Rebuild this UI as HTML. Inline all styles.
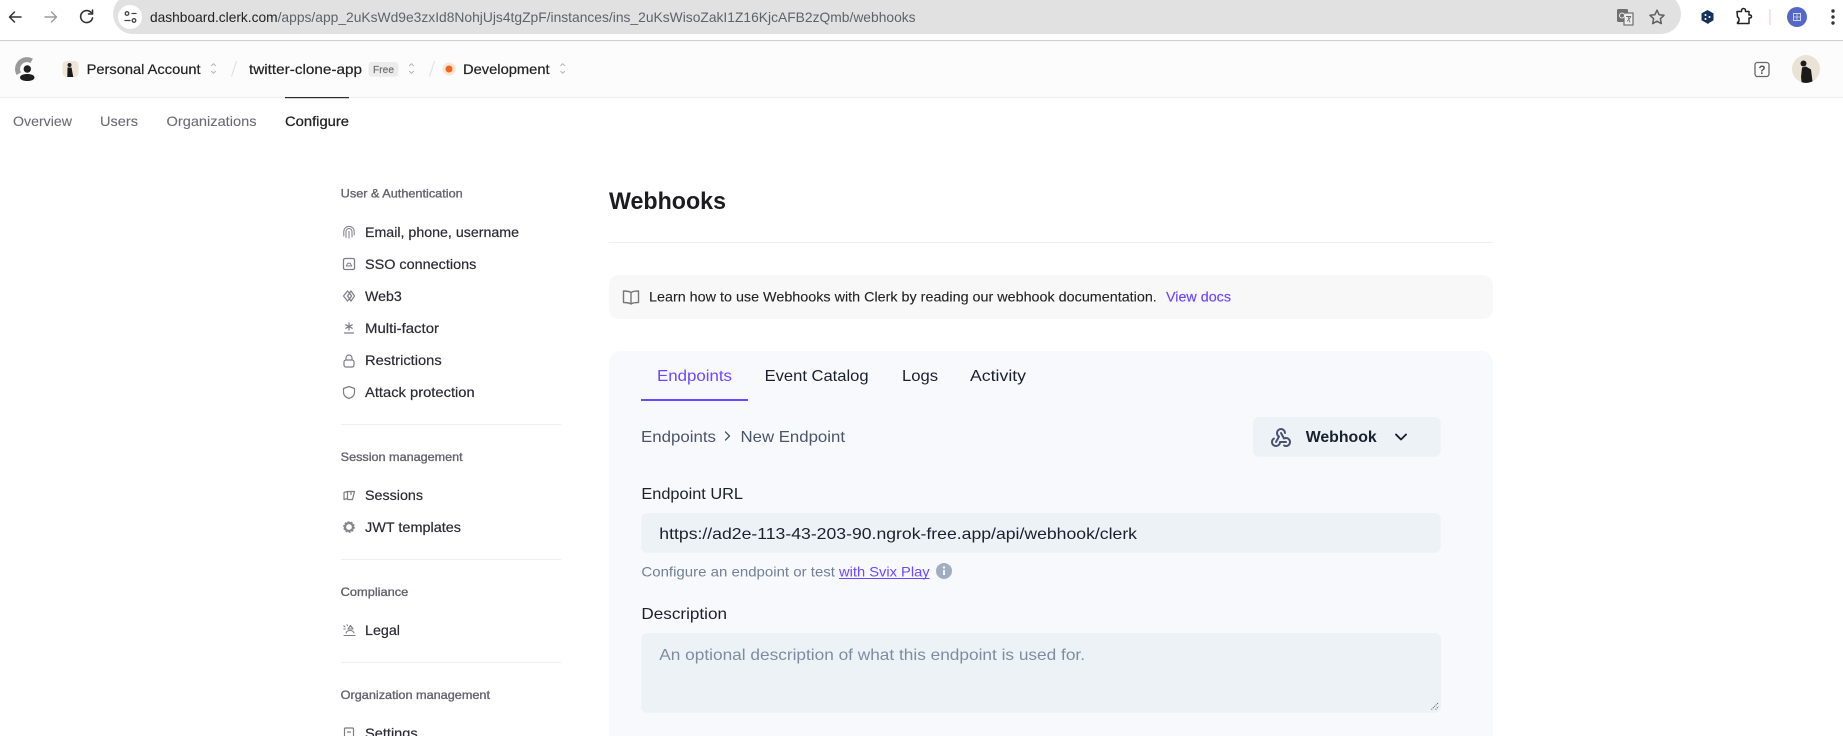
<!DOCTYPE html>
<html lang="en">
<head>
<meta charset="utf-8">
<title>Webhooks</title>
<style>
html,body{margin:0;padding:0;background:#fff;width:1843px;height:736px;overflow:hidden}
svg{display:block;font-family:"Liberation Sans",sans-serif}
.nav{font-size:14px;fill:#6b6b73;stroke:#6b6b73;stroke-width:.1}
.side{font-size:14px;fill:#2b2b33;stroke:#2b2b33;stroke-width:.2}
.head{font-size:12px;fill:#64646e;stroke:#64646e;stroke-width:.35}
.ic{fill:none;stroke:#7d7d85;stroke-width:1.2;stroke-linecap:round;stroke-linejoin:round}
.top{font-size:14px;fill:#222;stroke:#222;stroke-width:.2}
.ch{fill:none;stroke:#b0b0b5;stroke-width:1;stroke-linecap:round;stroke-linejoin:round}
</style>
</head>
<body>
<svg width="1843" height="736" viewBox="0 0 1843 736" xmlns="http://www.w3.org/2000/svg">
<defs><clipPath id="av"><circle cx="1806" cy="69" r="14"/></clipPath></defs>
<!-- browser bar -->
<rect width="1843" height="40" fill="#fff"/>
<rect x="0" y="40" width="1843" height="1.2" fill="#cfcfcf"/>
<rect x="113" y="-6" width="1568" height="40" rx="20" fill="#e1e1e1"/>
<circle cx="130" cy="17" r="12" fill="#fff"/>
<g fill="none" stroke="#444" stroke-width="1.3" stroke-linecap="round">
<circle cx="127" cy="13.5" r="1.8"/><path d="M132 13.5h4"/>
<circle cx="134" cy="20.5" r="1.8"/><path d="M125 20.5h5"/>
</g>
<g fill="none" stroke="#333" stroke-width="1.5" stroke-linecap="round" stroke-linejoin="round">
<path d="M21 17H10M14.500 12L9.500 17l5 5"/>
</g>
<g fill="none" stroke="#9a9a9a" stroke-width="1.4" stroke-linecap="round" stroke-linejoin="round">
<path d="M45 17h11M51.500 12l5 5-5 5"/>
</g>
<g fill="none" stroke="#333" stroke-width="1.6" stroke-linecap="round" stroke-linejoin="round">
<path d="M91.500 13a6 6 0 1 0 1 5"/><path d="M92.500 10v4h-4"/>
</g>
<text x="150" y="22" font-size="14" fill="#222" textLength="127.600" lengthAdjust="spacingAndGlyphs">dashboard.clerk.com</text>
<text x="277.600" y="22" font-size="14" fill="#5f6368" textLength="638" lengthAdjust="spacingAndGlyphs">/apps/app_2uKsWd9e3zxId8NohjUjs4tgZpF/instances/ins_2uKsWisoZakI1Z16KjcAFB2zQmb/webhooks</text>
<!-- translate icon -->
<rect x="1617" y="9" width="11" height="13" rx="1.500" fill="#6f6f6f"/>
<rect x="1624" y="13" width="9" height="12" fill="#eee" stroke="#6f6f6f" stroke-width="1.200"/>
<circle cx="1622" cy="15.500" r="2.500" fill="none" stroke="#eee" stroke-width="1"/>
<path d="M1626 16.500h5M1628 16.500l2 6M1631 16.500l-4 5" stroke="#6f6f6f" stroke-width=".9" fill="none"/>
<path d="M1657 10.200l2.100 4.500 4.900.6-3.600 3.400.9 4.900-4.300-2.400-4.300 2.400.9-4.900-3.600-3.400 4.900-.6z" fill="none" stroke="#5f5f5f" stroke-width="1.500" stroke-linejoin="round"/>
<!-- extension hex -->
<path d="M1707.500 10l6 3.400v6.800l-5 3v1l-1.500-.8-5.500-3.200v-6.800z" fill="#16325c"/>
<circle cx="1705.500" cy="15" r="1" fill="#fff"/><circle cx="1709.500" cy="17" r="1" fill="#fff"/><circle cx="1705.500" cy="19" r="1" fill="#fff"/>
<path d="M1737 11.500h4.500v-1a2 2 0 0 1 4 0v1h3.500v3.500h1a1.500 1.500 0 0 1 0 3h-1v5.500h-11.500v-1a2.500 2.500 0 0 0 1.500-2.500 2.500 2.500 0 0 0-1.500-3z" fill="none" stroke="#222" stroke-width="1.500" stroke-linejoin="round"/>
<rect x="1769.300" y="9" width="1.400" height="16" fill="#e6d8f8"/>
<circle cx="1797" cy="17" r="10" fill="#5568c6"/>
<rect x="1793.500" y="13.500" width="7" height="7" fill="none" stroke="#cfd5f3" stroke-width="1"/><path d="M1793.500 17h7M1797 13.500v7" stroke="#cfd5f3" stroke-width=".8"/>
<circle cx="1833" cy="11" r="1.700" fill="#333"/><circle cx="1833" cy="17" r="1.700" fill="#333"/><circle cx="1833" cy="23" r="1.700" fill="#333"/>

<!-- app header -->
<rect y="41.200" width="1843" height="56" fill="#fcfcfc"/>
<rect y="97" width="1843" height="1" fill="#eeeeee"/>
<!-- clerk logo -->
<path d="M31.700 60.800A9.500 9.500 0 0 0 18.800 73.800" fill="none" stroke="#9a9a9a" stroke-width="5"/>
<circle cx="27.300" cy="69" r="3.700" fill="#222"/>
<path d="M20 77.500c0-2.200 3.300-3.500 7.300-3.500s7.200 1.300 7.200 3.500-3.200 3.500-7.200 3.500-7.300-1.300-7.300-3.500z" fill="#1f1f1f"/>
<!-- small avatar -->
<rect x="62.500" y="61" width="16" height="16" rx="4" fill="#efe6d9"/>
<circle cx="69.500" cy="65" r="2" fill="#222"/>
<path d="M67.500 67.500h4l1.800 9.500h-6z" fill="#191919"/>
<text x="86.600" y="74" class="top" textLength="114" lengthAdjust="spacingAndGlyphs">Personal Account</text>
<path class="ch" d="M211.500 65.700l2-2 2 2M211.500 71.300l2 2 2-2"/>
<path d="M236.500 61l-5 15.500" stroke="#dcdcdc" stroke-width="1" fill="none"/>
<text x="249" y="74" class="top" textLength="113" lengthAdjust="spacingAndGlyphs">twitter-clone-app</text>
<rect x="368.500" y="62" width="30" height="14.700" rx="3.500" fill="#ececec"/>
<text x="373" y="73" font-size="10.500" fill="#6b6b6b" stroke="#6b6b6b" stroke-width=".15" textLength="21" lengthAdjust="spacingAndGlyphs">Free</text>
<path class="ch" d="M409.500 65.700l2-2 2 2M409.500 71.300l2 2 2-2"/>
<path d="M434.500 61l-5 15.500" stroke="#dcdcdc" stroke-width="1" fill="none"/>
<circle cx="449" cy="69" r="6.500" fill="#fbe3d6"/>
<circle cx="449" cy="69" r="3.500" fill="#f2651c"/>
<text x="463" y="74" class="top" textLength="86.600" lengthAdjust="spacingAndGlyphs">Development</text>
<path class="ch" d="M560.700 65.700l2-2 2 2M560.700 71.300l2 2 2-2"/>
<!-- right header -->
<rect x="1755" y="62.500" width="14" height="14" rx="2.500" fill="none" stroke="#666" stroke-width="1.300"/>
<text x="1758.500" y="74" font-size="11.500" font-weight="700" fill="#555">?</text>
<circle cx="1806" cy="69" r="14" fill="#ebe2d6"/>
<g clip-path="url(#av)">
<circle cx="1803.500" cy="63.500" r="3" fill="#1c1c1c"/>
<path d="M1802 67.500l4-1 5 3 1.800 14-11 .5-.8-7z" fill="#1a1a1a"/>
</g>
<!-- nav -->
<rect x="285" y="97" width="64" height="1.200" fill="#2b2b2b"/>
<text x="13" y="126" class="nav" textLength="59" lengthAdjust="spacingAndGlyphs">Overview</text>
<text x="100" y="126" class="nav" textLength="38" lengthAdjust="spacingAndGlyphs">Users</text>
<text x="166.500" y="126" class="nav" textLength="90" lengthAdjust="spacingAndGlyphs">Organizations</text>
<text x="285" y="126" font-size="14" fill="#222" stroke="#222" stroke-width=".25" textLength="64" lengthAdjust="spacingAndGlyphs">Configure</text>

<!-- sidebar -->
<text x="340.700" y="197.500" class="head" textLength="122" lengthAdjust="spacingAndGlyphs">User &amp; Authentication</text>
<text x="365" y="237" class="side" textLength="154" lengthAdjust="spacingAndGlyphs">Email, phone, username</text>
<text x="365" y="269" class="side" textLength="111.300" lengthAdjust="spacingAndGlyphs">SSO connections</text>
<text x="365" y="301" class="side" textLength="36.700" lengthAdjust="spacingAndGlyphs">Web3</text>
<text x="365" y="333" class="side" textLength="74" lengthAdjust="spacingAndGlyphs">Multi-factor</text>
<text x="365" y="365" class="side" textLength="76.700" lengthAdjust="spacingAndGlyphs">Restrictions</text>
<text x="365" y="397" class="side" textLength="109.700" lengthAdjust="spacingAndGlyphs">Attack protection</text>
<!-- fingerprint -->
<g class="ic" style="stroke-width:1">
<path d="M343.800 236v-4.500a5.200 5.200 0 0 1 10.400 0v3.500M346 237.500v-6a3 3 0 0 1 6 0v5.500M349 238v-6.500"/>
</g>
<g class="ic" style="stroke-width:1.300">
<rect x="343.500" y="258.500" width="11" height="11" rx="1.500"/>
<path d="M346.300 266l1.500-2.800h2.400l1.500 2.800z" style="stroke-width:1"/>
</g>
<g class="ic">
<path d="M347.500 291l-4 5 4 5 2-2.500-2-2.500 2-2.500zM351 291l3.500 5-3.500 5-1.500-2 2-3-2-3z"/>
</g>
<g class="ic">
<path d="M349 323v7M345.800 324.800l6.400 3.500M352.200 324.800l-6.400 3.500M344.500 333h9"/>
</g>
<g class="ic">
<rect x="344" y="360" width="10" height="7" rx="2"/>
<path d="M346 360v-2a3 3 0 0 1 6 0v2"/>
</g>
<g class="ic">
<path d="M349 386.500l5.500 2v4c0 3-2.500 5-5.500 6-3-1-5.500-3-5.500-6v-4z"/>
</g>
<rect x="341" y="424" width="220" height="1" fill="#efefef"/>

<text x="340.700" y="461" class="head" textLength="122" lengthAdjust="spacingAndGlyphs">Session management</text>
<text x="365" y="500" class="side" textLength="58" lengthAdjust="spacingAndGlyphs">Sessions</text>
<text x="365" y="532" class="side" textLength="96" lengthAdjust="spacingAndGlyphs">JWT templates</text>
<g class="ic">
<path d="M344 492.500l3.500-1v7l-3.500 1zM347.500 491.500h7l-2 8h-5M351 491.500v3"/>
</g>
<circle cx="349" cy="527" r="4" fill="none" stroke="#85858c" stroke-width="2.200"/>
<circle cx="349" cy="527" r="5.400" fill="none" stroke="#85858c" stroke-width="1" stroke-dasharray="1.800 1.600"/>
<rect x="341" y="559" width="220" height="1" fill="#efefef"/>

<text x="340.700" y="596" class="head" textLength="67.600" lengthAdjust="spacingAndGlyphs">Compliance</text>
<text x="365" y="635" class="side" textLength="35" lengthAdjust="spacingAndGlyphs">Legal</text>
<g class="ic" style="stroke-width:1.100">
<path d="M350.500 625.500l-2.500 3.500h5z"/>
<path d="M344 635.500h11M346 633c.5-1.500 2-2.500 4-2.500s3.500 1 4 2.500M343.800 626l1.200.8M343.800 629h1.500M347 624.800l.5.7"/>
</g>
<rect x="341" y="662" width="220" height="1" fill="#efefef"/>

<text x="340.700" y="699" class="head" textLength="149.300" lengthAdjust="spacingAndGlyphs">Organization management</text>
<text x="365" y="738" class="side" textLength="52.700" lengthAdjust="spacingAndGlyphs">Settings</text>
<g class="ic">
<rect x="344.500" y="728" width="9" height="10" rx="1"/>
<path d="M347.500 732h3"/>
</g>

<!-- main -->
<text x="609" y="209" font-size="24" font-weight="700" fill="#1c1c20" textLength="117" lengthAdjust="spacingAndGlyphs">Webhooks</text>
<rect x="609" y="242" width="884" height="1" fill="#eeeeee"/>
<rect x="609" y="275" width="884" height="44" rx="10" fill="#f8f8f8"/>
<g fill="none" stroke="#777" stroke-width="1.400" stroke-linejoin="round">
<path d="M631 292.500c-1.500-1-4-1.500-7.500-1.500v11.500c3.500 0 6 .5 7.500 1.500 1.500-1 4-1.500 7.500-1.500V291c-3.500 0-6 .5-7.500 1.500zM631 292.500V304"/>
</g>
<text x="649" y="301.500" font-size="14" fill="#222" stroke="#222" stroke-width=".1" textLength="507.800" lengthAdjust="spacingAndGlyphs">Learn how to use Webhooks with Clerk by reading our webhook documentation.</text>
<text x="1166" y="301.500" font-size="14" fill="#6c47ff" stroke="#6c47ff" stroke-width=".15" textLength="65" lengthAdjust="spacingAndGlyphs">View docs</text>

<!-- card -->
<path d="M609 760V363a12 12 0 0 1 12-12h860a12 12 0 0 1 12 12v397z" fill="#f8f9fd"/>
<text x="657" y="381" font-size="16" fill="#6c47ff" textLength="75" lengthAdjust="spacingAndGlyphs">Endpoints</text>
<text x="764.600" y="381" font-size="16" fill="#1a202c" textLength="104" lengthAdjust="spacingAndGlyphs">Event Catalog</text>
<text x="902" y="381" font-size="16" fill="#1a202c" textLength="36" lengthAdjust="spacingAndGlyphs">Logs</text>
<text x="970" y="381" font-size="16" fill="#1a202c" textLength="56" lengthAdjust="spacingAndGlyphs">Activity</text>
<rect x="641" y="399" width="107" height="2" fill="#6c47ff"/>

<text x="641" y="442" font-size="16" fill="#4a5568" textLength="75" lengthAdjust="spacingAndGlyphs">Endpoints</text>
<path d="M725.500 432l4 4-4 4" fill="none" stroke="#4a5568" stroke-width="1.300" stroke-linecap="round" stroke-linejoin="round"/>
<text x="740.500" y="442" font-size="16" fill="#4a5568" textLength="104.500" lengthAdjust="spacingAndGlyphs">New Endpoint</text>

<rect x="1253" y="417" width="187.700" height="39.700" rx="6" fill="#edf2f7"/>
<g transform="translate(1269 425)" fill="none" stroke="#4a5170" stroke-width="2" stroke-linecap="round" stroke-linejoin="round">
<path d="M4.876 13.61a4 4 0 1 0 6.124 3.39h6"/>
<path d="M15.066 20.502a4 4 0 1 0 1.934-7.502c-.706 0-1.424.179-2 .5l-3-5.500"/>
<path d="M16 8a4 4 0 1 0-8 0c0 1.506.77 2.818 2 3.500l-3 5.500"/>
</g>
<text x="1305.700" y="442" font-size="16" font-weight="700" fill="#1a202c" textLength="71" lengthAdjust="spacingAndGlyphs">Webhook</text>
<path d="M1396 434.500l5 5 5-5" fill="none" stroke="#1a202c" stroke-width="1.900" stroke-linecap="round" stroke-linejoin="round"/>

<text x="641.400" y="499" font-size="16" fill="#1a202c" textLength="101.600" lengthAdjust="spacingAndGlyphs">Endpoint URL</text>
<rect x="641" y="513" width="799.700" height="39.700" rx="6" fill="#edf2f7"/>
<text x="659.300" y="539" font-size="16" fill="#1a202c" textLength="477.700" lengthAdjust="spacingAndGlyphs">https://ad2e-113-43-203-90.ngrok-free.app/api/webhook/clerk</text>
<text x="641.400" y="576.500" font-size="14" fill="#718096" textLength="193.600" lengthAdjust="spacingAndGlyphs">Configure an endpoint or test</text>
<text x="839" y="576.500" font-size="14" fill="#6c47ff" textLength="90.600" lengthAdjust="spacingAndGlyphs">with Svix Play</text>
<rect x="839" y="578" width="90.600" height="1" fill="#6c47ff"/>
<circle cx="944" cy="571" r="8" fill="#a0aec0"/>
<rect x="943" y="570" width="2" height="5" fill="#f8f9fd"/>
<circle cx="944" cy="567.500" r="1.200" fill="#f8f9fd"/>

<text x="641.400" y="619" font-size="16" fill="#1a202c" textLength="85.600" lengthAdjust="spacingAndGlyphs">Description</text>
<rect x="641" y="633" width="800" height="79.700" rx="6" fill="#edf2f7"/>
<text x="659.300" y="660" font-size="16" fill="#7f8ba0" textLength="425.700" lengthAdjust="spacingAndGlyphs">An optional description of what this endpoint is used for.</text>
<path d="M1431.500 709.500l7-7M1435.500 709.500l3-3" stroke="#555" stroke-width="1" stroke-dasharray="1 1" fill="none"/>
</svg>
</body>
</html>
